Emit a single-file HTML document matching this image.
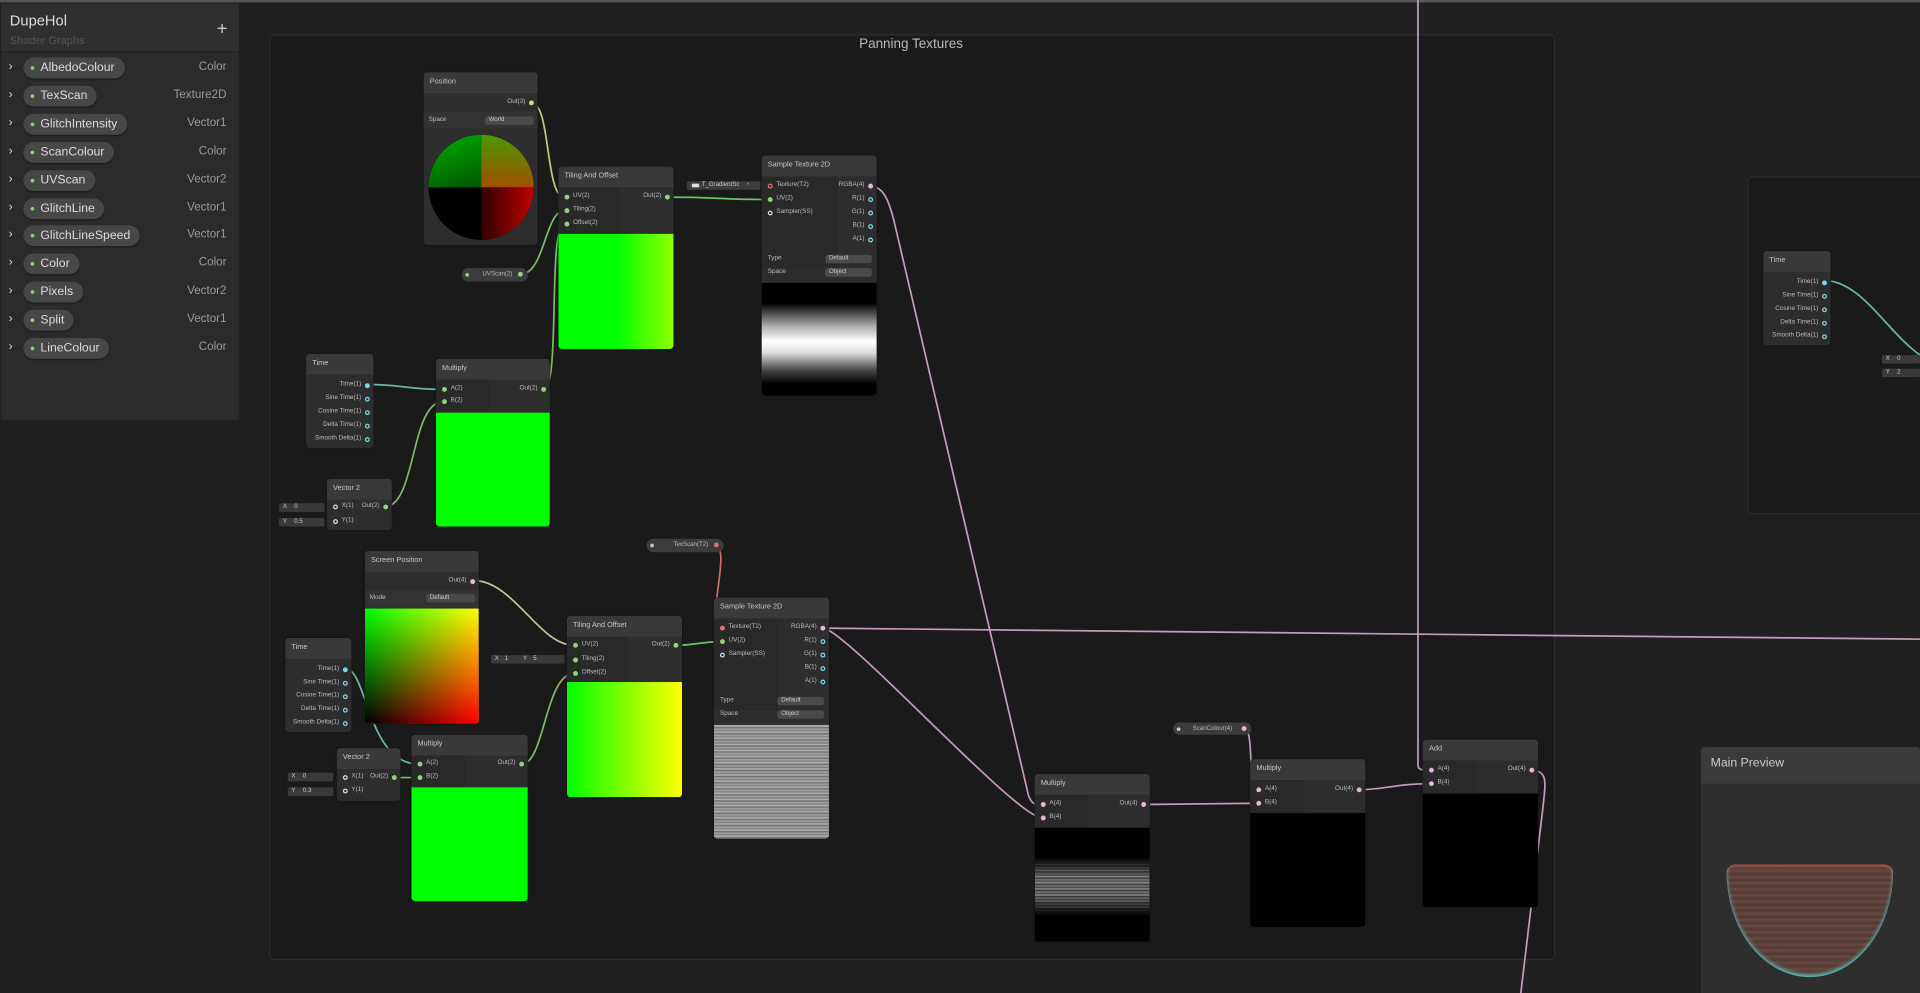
<!DOCTYPE html>
<html><head><meta charset="utf-8"><style>
html,body{margin:0;width:1920px;height:993px;overflow:hidden;background:#202020;font-family:"Liberation Sans",sans-serif}
#w{position:absolute;left:0;top:0;width:1568px;height:811px;transform:scale(1.22449);transform-origin:0 0}
.a{position:absolute}
.n{position:absolute;background:#2d2d2d;border-radius:3px;overflow:hidden;box-shadow:0 0 1px #111}
.n .h{height:17px;background:#393939;color:#c8c8c8;font-size:6px;line-height:17px;padding-left:5px}
.t{position:absolute;font-size:5.2px;color:#bdbdbd;white-space:nowrap;line-height:7px}
.p{position:absolute;width:4px;height:4px;border-radius:50%;border:1px solid #8fd67a;box-sizing:border-box}
.pf{background:#8fd67a}
.pt{border-color:#7cd8e8}
.pk{border-color:#e6b6dc;background:#e6b6dc}
.pr{border-color:#e37070}
.pw{border-color:#ddd}
.dd{position:absolute;background:#4a4a4a;border-radius:2px;height:7px;font-size:5px;color:#ccc;line-height:7px;padding-left:3px;box-sizing:border-box}
.pill{position:absolute;background:#3c3c3c;border-radius:6px;height:11px;font-size:5px;color:#bbb;line-height:11px}
.fld{position:absolute;background:#3a3a3a;height:7px;font-size:5px;color:#ccc;line-height:7px;border-radius:1px}
.bb .r{position:absolute;left:0;width:195px;height:20px}
.bb .r .c{position:absolute;left:6px;top:3px;color:#ddd;font-size:10px}
.bb .r .pl{position:absolute;left:18px;top:1px;height:17px;background:#474747;border-radius:9px;color:#ddd;font-size:10px;line-height:17px;padding:0 8px 0 14px;box-shadow:0 1px 1px #1a1a1a}
.bb .r .pl:before{content:"";position:absolute;left:6px;top:7px;width:3px;height:3px;border-radius:50%;background:#8fd67a}
.bb .r .ty{position:absolute;right:11px;top:3px;color:#9a9a9a;font-size:9.5px}
</style></head><body><div id="w">
<div class="a" style="left:0;top:0;width:1568px;height:2px;background:#555"></div>
<div class="a" style="left:220px;top:28px;width:1048px;height:754px;background:#1a1a1a;border:1px solid #2c2c2c;border-radius:4px"></div>
<div class="a" style="left:220px;top:30px;width:1048px;text-align:center;color:#bbb;font-size:11px">Panning Textures</div>
<div class="a" style="left:1427px;top:144px;width:150px;height:274px;background:#1a1a1a;border:1px solid #2c2c2c;border-radius:4px"></div>

<svg class="a" style="left:0;top:0" width="1568" height="811" fill="none" stroke-width="1.4">
<path d="M434 84 C450 84,445 161,461 161" stroke="#b8cf7a"/>
<path d="M425 224 C445 224,445 172,461 172" stroke="#7fb86a"/>
<path d="M444 318 C458 318,447 183,461 183" stroke="#7fb86a"/>
<path d="M299 314 C330 314,330 318,362 318" stroke="#6ab8a8"/>
<path d="M314 414 C340 414,335 328,362 328" stroke="#7fb86a"/>
<path d="M545 161 C585 161,590 163,628 163" stroke="#6cc46a"/>
<path d="M710 152 C720 152,725 160,730 180 L840 650 C843 657,845 657,851 657" stroke="#c49ac0"/>
<path d="M386 474 C420 474,440 527,469 527" stroke="#c3c39a"/>
<path d="M426 624 C445 624,445 550,469 550" stroke="#7fb86a"/>
<path d="M282 546 C300 546,300 624,342 624" stroke="#6ab8a8"/>
<path d="M321 635 C330 635,335 635,342 635" stroke="#7fb86a"/>
<path d="M551 527 C570 527,570 524,589 524" stroke="#6cc46a"/>
<path d="M584 446 C598 446,575 513,589 513" stroke="#d06a6a"/>
<path d="M672 513 C690 513,830 668,851 668" stroke="#c49ac0"/>
<path d="M672 513 L1568 522" stroke="#c49ac0"/>
<path d="M933 657 L1027 656" stroke="#c49ac0"/>
<path d="M1016 595 C1025 595,1018 645,1027 645" stroke="#c49ac0"/>
<path d="M1109 645 C1130 645,1140 640,1168 640" stroke="#c49ac0"/>
<path d="M1158 0 L1158 625 C1158 629,1162 629,1168 629" stroke="#c49ac0"/>
<path d="M1250 629 C1265 629,1262 640,1260 660 L1242 811" stroke="#c49ac0"/>
<path d="M1489 229 C1520 229,1540 270,1568 290" stroke="#6ab8a0"/>
</svg>

<div class="a bb" style="left:1px;top:3px;width:194px;height:340px;background:#2b2b2b;border-radius:3px">
<div class="a" style="left:0;top:0;width:194px;height:39px;background:#2f2f2f;border-bottom:1px solid #222"></div>
<div class="a" style="left:7px;top:7px;color:#ddd;font-size:12px">DupeHol</div>
<div class="a" style="left:7px;top:25px;color:#555;font-size:9px">Shader Graphs</div>
<div class="a" style="left:176px;top:12px;color:#ccc;font-size:15px">+</div>
<div class="r" style="top:43px"><span class="c">›</span><span class="pl">AlbedoColour</span><span class="ty">Color</span></div>
<div class="r" style="top:66px"><span class="c">›</span><span class="pl">TexScan</span><span class="ty">Texture2D</span></div>
<div class="r" style="top:89px"><span class="c">›</span><span class="pl">GlitchIntensity</span><span class="ty">Vector1</span></div>
<div class="r" style="top:112px"><span class="c">›</span><span class="pl">ScanColour</span><span class="ty">Color</span></div>
<div class="r" style="top:135px"><span class="c">›</span><span class="pl">UVScan</span><span class="ty">Vector2</span></div>
<div class="r" style="top:158px"><span class="c">›</span><span class="pl">GlitchLine</span><span class="ty">Vector1</span></div>
<div class="r" style="top:180px"><span class="c">›</span><span class="pl">GlitchLineSpeed</span><span class="ty">Vector1</span></div>
<div class="r" style="top:203px"><span class="c">›</span><span class="pl">Color</span><span class="ty">Color</span></div>
<div class="r" style="top:226px"><span class="c">›</span><span class="pl">Pixels</span><span class="ty">Vector2</span></div>
<div class="r" style="top:249px"><span class="c">›</span><span class="pl">Split</span><span class="ty">Vector1</span></div>
<div class="r" style="top:272px"><span class="c">›</span><span class="pl">LineColour</span><span class="ty">Color</span></div>
</div>

<div class="n" style="left:346px;top:59px;width:93px;height:141px"><div class="h">Position</div>
<div class="t" style="right:10px;top:21px">Out(3)</div><div class="p pf" style="right:3px;top:23px;border-color:#d6d67a;background:#d6d67a"></div>
<div class="a" style="left:0;top:32px;width:93px;height:14px;background:#333"></div>
<div class="t" style="left:4px;top:36px">Space</div><div class="dd" style="left:50px;top:36px;width:40px">World</div>
<div class="a" style="left:4px;top:51px;width:86px;height:86px;border-radius:50%;overflow:hidden;background:#000">
<div class="a" style="left:0;top:0;width:43px;height:43px;background:linear-gradient(160deg,#00b000,#005500)"></div>
<div class="a" style="left:43px;top:0;width:43px;height:43px;background:linear-gradient(180deg,#4a9a00,#a05000)"></div>
<div class="a" style="left:43px;top:43px;width:43px;height:43px;background:linear-gradient(90deg,#300000,#c00000)"></div>
</div>
</div>

<div class="n" style="left:456px;top:136px;width:94px;height:149px"><div class="h">Tiling And Offset</div>
<div class="a" style="left:0;top:17px;width:50px;height:37px;background:#292929"></div>
<div class="p pf" style="left:5px;top:23px"></div><div class="t" style="left:12px;top:21px">UV(2)</div>
<div class="p pf" style="left:5px;top:34px"></div><div class="t" style="left:12px;top:32px">Tiling(2)</div>
<div class="p pf" style="left:5px;top:45px"></div><div class="t" style="left:12px;top:43px">Offset(2)</div>
<div class="t" style="right:10px;top:21px">Out(2)</div><div class="p pf" style="right:3px;top:23px"></div>
<div class="a" style="left:0;top:55px;width:94px;height:94px;background:linear-gradient(90deg,#00ff00 50%,#90ff00 100%)"></div>
</div>

<div class="pill" style="left:377px;top:219px;width:54px"><span class="p pf" style="left:3px;top:4px;width:3px;height:3px"></span><span class="a" style="left:17px;top:0">UVScan(2)</span><span class="p pf" style="right:4px;top:3px"></span></div>
<div class="fld" style="left:561px;top:148px;width:60px;background:#3d3d3d"><span class="a" style="left:4px;top:2px;width:6px;height:3px;background:#ddd"></span><span class="a" style="left:12px">T_GradientSc</span><span class="a" style="left:49px;color:#e37070">•</span></div>

<div class="n" style="left:622px;top:127px;width:94px;height:196px"><div class="h">Sample Texture 2D</div>
<div class="a" style="left:0;top:18px;width:62px;height:74px;background:#292929"></div>
<div class="p pr" style="left:5px;top:23px"></div><div class="t" style="left:12px;top:21px">Texture(T2)</div>
<div class="p pf" style="left:5px;top:34px"></div><div class="t" style="left:12px;top:32px">UV(2)</div>
<div class="p pw" style="left:5px;top:45px"></div><div class="t" style="left:12px;top:43px">Sampler(SS)</div>
<div class="t" style="right:10px;top:21px">RGBA(4)</div><div class="p pk" style="right:3px;top:23px"></div>
<div class="t" style="right:10px;top:32px">R(1)</div><div class="p pt" style="right:3px;top:34px"></div>
<div class="t" style="right:10px;top:43px">G(1)</div><div class="p pt" style="right:3px;top:45px"></div>
<div class="t" style="right:10px;top:54px">B(1)</div><div class="p pt" style="right:3px;top:56px"></div>
<div class="t" style="right:10px;top:65px">A(1)</div><div class="p pt" style="right:3px;top:67px"></div>
<div class="t" style="left:5px;top:81px">Type</div><div class="dd" style="left:52px;top:81px;width:38px">Default</div>
<div class="t" style="left:5px;top:92px">Space</div><div class="dd" style="left:52px;top:92px;width:38px">Object</div>
<div class="a" style="left:0;top:104px;width:94px;height:92px;background:linear-gradient(#000 0%,#000 18%,#aaa 38%,#fff 52%,#ddd 62%,#444 78%,#000 90%)"></div>
</div>

<div class="n" style="left:250px;top:289px;width:55px;height:77px"><div class="h">Time</div>
<div class="t" style="right:10px;top:22px">Time(1)</div><div class="p pt" style="right:3px;top:24px;background:#7cd8e8"></div>
<div class="t" style="right:10px;top:33px">Sine Time(1)</div><div class="p pt" style="right:3px;top:35px"></div>
<div class="t" style="right:10px;top:44px">Cosine Time(1)</div><div class="p pt" style="right:3px;top:46px"></div>
<div class="t" style="right:10px;top:55px">Delta Time(1)</div><div class="p pt" style="right:3px;top:57px"></div>
<div class="t" style="right:10px;top:66px">Smooth Delta(1)</div><div class="p pt" style="right:3px;top:68px"></div>
</div>

<div class="n" style="left:356px;top:293px;width:93px;height:137px"><div class="h">Multiply</div>
<div class="a" style="left:0;top:17px;width:44px;height:27px;background:#292929"></div>
<div class="p pf" style="left:5px;top:23px"></div><div class="t" style="left:12px;top:21px">A(2)</div>
<div class="p pf" style="left:5px;top:33px"></div><div class="t" style="left:12px;top:31px">B(2)</div>
<div class="t" style="right:10px;top:21px">Out(2)</div><div class="p pf" style="right:3px;top:23px"></div>
<div class="a" style="left:0;top:44px;width:93px;height:93px;background:#00ff00"></div>
</div>

<div class="n" style="left:267px;top:391px;width:53px;height:42px"><div class="h">Vector 2</div>
<div class="p pw" style="left:5px;top:21px"></div><div class="t" style="left:12px;top:19px">X(1)</div>
<div class="p pw" style="left:5px;top:33px"></div><div class="t" style="left:12px;top:31px">Y(1)</div>
<div class="t" style="right:10px;top:19px">Out(2)</div><div class="p pf" style="right:3px;top:21px"></div>
</div>
<div class="fld" style="left:228px;top:411px;width:37px"><span style="padding-left:3px">X</span><span style="padding-left:6px">0</span></div>
<div class="fld" style="left:228px;top:423px;width:37px"><span style="padding-left:3px">Y</span><span style="padding-left:6px">0.5</span></div>

<div class="n" style="left:298px;top:450px;width:93px;height:141px"><div class="h">Screen Position</div>
<div class="t" style="right:10px;top:21px">Out(4)</div><div class="p pk" style="right:3px;top:23px"></div>
<div class="a" style="left:0;top:32px;width:93px;height:14px;background:#333"></div>
<div class="t" style="left:4px;top:35px">Mode</div><div class="dd" style="left:50px;top:35px;width:40px">Default</div>
<div class="a" style="left:0;top:47px;width:93px;height:94px;background:linear-gradient(90deg,#00ff00,#ffff00);"></div>
<div class="a" style="left:0;top:47px;width:93px;height:94px;background:linear-gradient(90deg,#000,#ff0000);-webkit-mask:linear-gradient(transparent,#000);mask:linear-gradient(transparent,#000)"></div>
</div>

<div class="n" style="left:463px;top:503px;width:94px;height:148px"><div class="h">Tiling And Offset</div>
<div class="a" style="left:0;top:17px;width:50px;height:37px;background:#292929"></div>
<div class="p pf" style="left:5px;top:22px"></div><div class="t" style="left:12px;top:20px">UV(2)</div>
<div class="p pf" style="left:5px;top:34px"></div><div class="t" style="left:12px;top:32px">Tiling(2)</div>
<div class="p pf" style="left:5px;top:45px"></div><div class="t" style="left:12px;top:43px">Offset(2)</div>
<div class="t" style="right:10px;top:20px">Out(2)</div><div class="p pf" style="right:3px;top:22px"></div>
<div class="a" style="left:0;top:54px;width:94px;height:94px;background:linear-gradient(90deg,#00ff00,#ffff00)"></div>
</div>
<div class="fld" style="left:401px;top:535px;width:60px"><span style="padding-left:3px">X</span><span style="padding-left:5px">1</span><span style="padding-left:12px">Y</span><span style="padding-left:5px">5</span></div>

<div class="pill" style="left:528px;top:440px;width:63px"><span class="p pf" style="left:3px;top:4px;width:3px;height:3px;border-color:#ccc"></span><span class="a" style="left:22px">TexScan(T2)</span><span class="p pr" style="right:4px;top:3px;background:#e37070"></span></div>

<div class="n" style="left:583px;top:488px;width:94px;height:197px"><div class="h">Sample Texture 2D</div>
<div class="a" style="left:0;top:18px;width:52px;height:74px;background:#292929"></div>
<div class="p pr" style="left:5px;top:23px;background:#e37070"></div><div class="t" style="left:12px;top:21px">Texture(T2)</div>
<div class="p pf" style="left:5px;top:34px"></div><div class="t" style="left:12px;top:32px">UV(2)</div>
<div class="p pw" style="left:5px;top:45px"></div><div class="t" style="left:12px;top:43px">Sampler(SS)</div>
<div class="t" style="right:10px;top:21px">RGBA(4)</div><div class="p pk" style="right:3px;top:23px"></div>
<div class="t" style="right:10px;top:32px">R(1)</div><div class="p pt" style="right:3px;top:34px"></div>
<div class="t" style="right:10px;top:43px">G(1)</div><div class="p pt" style="right:3px;top:45px"></div>
<div class="t" style="right:10px;top:54px">B(1)</div><div class="p pt" style="right:3px;top:56px"></div>
<div class="t" style="right:10px;top:65px">A(1)</div><div class="p pt" style="right:3px;top:67px"></div>
<div class="t" style="left:5px;top:81px">Type</div><div class="dd" style="left:52px;top:81px;width:38px">Default</div>
<div class="t" style="left:5px;top:92px">Space</div><div class="dd" style="left:52px;top:92px;width:38px">Object</div>
<div class="a" style="left:0;top:104px;width:94px;height:93px;background:repeating-linear-gradient(#8a8a8a 0,#bbb 1px,#6a6a6a 2px,#a5a5a5 3.5px,#777 5px)"></div>
</div>

<div class="n" style="left:233px;top:521px;width:54px;height:77px"><div class="h">Time</div>
<div class="t" style="right:10px;top:22px">Time(1)</div><div class="p pt" style="right:3px;top:24px;background:#7cd8e8"></div>
<div class="t" style="right:10px;top:33px">Sine Time(1)</div><div class="p pt" style="right:3px;top:35px"></div>
<div class="t" style="right:10px;top:44px">Cosine Time(1)</div><div class="p pt" style="right:3px;top:46px"></div>
<div class="t" style="right:10px;top:55px">Delta Time(1)</div><div class="p pt" style="right:3px;top:57px"></div>
<div class="t" style="right:10px;top:66px">Smooth Delta(1)</div><div class="p pt" style="right:3px;top:68px"></div>
</div>

<div class="n" style="left:275px;top:611px;width:52px;height:43px"><div class="h">Vector 2</div>
<div class="p pw" style="left:5px;top:22px"></div><div class="t" style="left:12px;top:20px">X(1)</div>
<div class="p pw" style="left:5px;top:33px"></div><div class="t" style="left:12px;top:31px">Y(1)</div>
<div class="t" style="right:10px;top:20px">Out(2)</div><div class="p pf" style="right:3px;top:22px"></div>
</div>
<div class="fld" style="left:235px;top:631px;width:37px"><span style="padding-left:3px">X</span><span style="padding-left:6px">0</span></div>
<div class="fld" style="left:235px;top:643px;width:37px"><span style="padding-left:3px">Y</span><span style="padding-left:6px">0.3</span></div>

<div class="n" style="left:336px;top:600px;width:95px;height:136px"><div class="h">Multiply</div>
<div class="a" style="left:0;top:17px;width:44px;height:26px;background:#292929"></div>
<div class="p pf" style="left:5px;top:22px"></div><div class="t" style="left:12px;top:20px">A(2)</div>
<div class="p pf" style="left:5px;top:33px"></div><div class="t" style="left:12px;top:31px">B(2)</div>
<div class="t" style="right:10px;top:20px">Out(2)</div><div class="p pf" style="right:3px;top:22px"></div>
<div class="a" style="left:0;top:43px;width:95px;height:93px;background:#00ff00"></div>
</div>

<div class="n" style="left:845px;top:632px;width:94px;height:137px"><div class="h">Multiply</div>
<div class="a" style="left:0;top:17px;width:44px;height:27px;background:#292929"></div>
<div class="p pk" style="left:5px;top:23px"></div><div class="t" style="left:12px;top:21px">A(4)</div>
<div class="p pk" style="left:5px;top:34px"></div><div class="t" style="left:12px;top:32px">B(4)</div>
<div class="t" style="right:10px;top:21px">Out(4)</div><div class="p pk" style="right:3px;top:23px"></div>
<div class="a" style="left:0;top:44px;width:94px;height:93px;background:#000"></div>
<div class="a" style="left:0;top:68px;width:94px;height:48px;background:repeating-linear-gradient(#555 0,#999 1px,#333 2px,#777 3.5px,#444 5px);-webkit-mask:linear-gradient(transparent,#000 35%,#000 65%,transparent);mask:linear-gradient(transparent,#000 35%,#000 65%,transparent)"></div>
</div>

<div class="pill" style="left:958px;top:590px;width:64px;height:10px;line-height:10px"><span class="p pf" style="left:3px;top:4px;width:3px;height:3px;border-color:#ccc"></span><span class="a" style="left:16px">ScanColour(4)</span><span class="p pk" style="right:4px;top:3px"></span></div>

<div class="n" style="left:1021px;top:620px;width:94px;height:137px"><div class="h">Multiply</div>
<div class="a" style="left:0;top:17px;width:44px;height:27px;background:#292929"></div>
<div class="p pk" style="left:5px;top:23px"></div><div class="t" style="left:12px;top:21px">A(4)</div>
<div class="p pk" style="left:5px;top:34px"></div><div class="t" style="left:12px;top:32px">B(4)</div>
<div class="t" style="right:10px;top:21px">Out(4)</div><div class="p pk" style="right:3px;top:23px"></div>
<div class="a" style="left:0;top:44px;width:94px;height:93px;background:#000"></div>
</div>

<div class="n" style="left:1162px;top:604px;width:94px;height:137px"><div class="h">Add</div>
<div class="a" style="left:0;top:17px;width:44px;height:27px;background:#292929"></div>
<div class="p pk" style="left:5px;top:23px"></div><div class="t" style="left:12px;top:21px">A(4)</div>
<div class="p pk" style="left:5px;top:34px"></div><div class="t" style="left:12px;top:32px">B(4)</div>
<div class="t" style="right:10px;top:21px">Out(4)</div><div class="p pk" style="right:3px;top:23px"></div>
<div class="a" style="left:0;top:44px;width:94px;height:93px;background:#000"></div>
</div>

<div class="n" style="left:1440px;top:205px;width:55px;height:77px"><div class="h">Time</div>
<div class="t" style="right:10px;top:22px">Time(1)</div><div class="p pt" style="right:3px;top:24px;background:#7cd8e8"></div>
<div class="t" style="right:10px;top:33px">Sine Time(1)</div><div class="p pt" style="right:3px;top:35px"></div>
<div class="t" style="right:10px;top:44px">Cosine Time(1)</div><div class="p pt" style="right:3px;top:46px"></div>
<div class="t" style="right:10px;top:55px">Delta Time(1)</div><div class="p pt" style="right:3px;top:57px"></div>
<div class="t" style="right:10px;top:66px">Smooth Delta(1)</div><div class="p pt" style="right:3px;top:68px"></div>
</div>
<div class="fld" style="left:1537px;top:290px;width:31px"><span style="padding-left:3px">X</span><span style="padding-left:6px">0</span></div>
<div class="fld" style="left:1537px;top:301px;width:31px"><span style="padding-left:3px">Y</span><span style="padding-left:6px">2</span></div>

<div class="a" style="left:1389px;top:610px;width:179px;height:201px;background:#2e2e2e;border-radius:3px 3px 0 0;overflow:hidden">
<div class="a" style="left:0;top:0;width:179px;height:30px;background:#3b3b3b"></div>
<div class="a" style="left:8px;top:8px;color:#ccc;font-size:10px">Main Preview</div>
<div class="a" style="left:21px;top:96px;width:136px;height:92px;border-radius:8px 8px 68px 68px/6px 6px 86px 86px;background:repeating-linear-gradient(#6a4a40 0,#5a3e36 2px,#4f3a34 3px,#654640 5px);box-shadow:inset 0 -2px 3px #5ab8b8, inset 0 2px 2px #a05048"></div>
</div>
</div></body></html>
